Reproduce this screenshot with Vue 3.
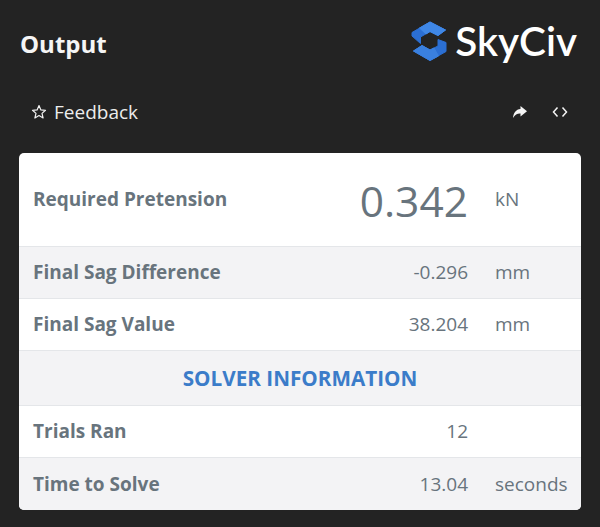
<template>
  <div class="output">
    <header class="output__head">
      <h2 class="output__title">Output</h2>
      <div class="logo">
        <svg class="logo__mark" width="36" height="41" viewBox="0 0 36 41">
          <g stroke-width="1" stroke-linejoin="round">
            <path d="M1 11.5 L19 1 L34.5 9 L27 14.5 L19 10.5 L9.5 16 L9.5 22.5 L1 15 Z" fill="#2b6fd3" stroke="#2b6fd3" />
            <path d="M8.5 7 L19 1 L34.5 9 L27 14.5 L19 10.5 L15 13 Z" fill="#3f87e6" stroke="#3f87e6" />
            <path d="M35 21.5 L35 30.5 L19 39.5 L2.5 30 L11 24.5 L19 29 L27 25 L27 18.5 Z" fill="#2b6fd3" stroke="#2b6fd3" />
            <path d="M27.5 35 L19 39.5 L2.5 30 L11 24.5 L19 29 L23 27 Z" fill="#3a80df" stroke="#3a80df" />
          </g>
        </svg>
        <span class="logo__text">SkyCiv</span>
      </div>
    </header>

    <div class="toolbar">
      <button type="button" class="toolbar__feedback">
        <svg width="16" height="16" viewBox="0 0 16 16">
          <path d="M8 1.6 L9.9 5.9 L14.5 6.3 L11 9.4 L12.1 14 L8 11.6 L3.9 14 L5 9.4 L1.5 6.3 L6.1 5.9 Z" fill="none" stroke="#f2f2f2" stroke-width="1.2" stroke-linejoin="round" />
        </svg>
        <span>Feedback</span>
      </button>
      <div class="toolbar__icons">
        <svg width="16" height="14" viewBox="0 0 16 14">
          <path d="M8.5 1 L15 6.2 L8.5 11.5 V8.6 C5.5 8.4 3 9.6 1 13 C1.4 8 4 4.4 8.5 4 Z" fill="#f5f5f5" />
        </svg>
        <svg width="16" height="12" viewBox="0 0 16 12">
          <path d="M5.5 1.5 L1.5 6 L5.5 10.5 M10.5 1.5 L14.5 6 L10.5 10.5" fill="none" stroke="#f5f5f5" stroke-width="1.5" />
        </svg>
      </div>
    </div>

    <div class="card">
      <div class="row row--big">
        <span class="row__label">Required Pretension</span>
        <span class="row__value">0.342</span>
        <span class="row__unit">kN</span>
      </div>
      <div
        v-for="item in topRows"
        :key="item.label"
        class="row"
        :class="{ 'row--grey': item.grey }"
      >
        <span class="row__label">{{ item.label }}</span>
        <span class="row__value">{{ item.value }}</span>
        <span class="row__unit">{{ item.unit }}</span>
      </div>
      <div class="card__section">SOLVER INFORMATION</div>
      <div
        v-for="item in solverRows"
        :key="item.label"
        class="row"
        :class="{ 'row--grey': item.grey }"
      >
        <span class="row__label">{{ item.label }}</span>
        <span class="row__value">{{ item.value }}</span>
        <span class="row__unit">{{ item.unit }}</span>
      </div>
    </div>
  </div>
</template>

<script setup>
const topRows = [
  { label: 'Final Sag Difference', value: '-0.296', unit: 'mm', grey: true },
  { label: 'Final Sag Value', value: '38.204', unit: 'mm', grey: false },
]

const solverRows = [
  { label: 'Trials Ran', value: '12', unit: '', grey: false },
  { label: 'Time to Solve', value: '13.04', unit: 'seconds', grey: true },
]
</script>

<style>
html,
body {
  margin: 0;
  background: #232323;
}
</style>

<style scoped>
.output {
  width: 600px;
  height: 527px;
  box-sizing: border-box;
  padding: 19px 19px 0 19px;
  background: #232323;
  font-family: 'Open Sans', sans-serif;
}

.output__head {
  display: flex;
  justify-content: space-between;
  align-items: center;
  height: 44px;
}

.output__title {
  margin: 4px 0 0 1px;
  font-size: 24px;
  font-weight: 700;
  color: #f5f5f5;
}

.logo {
  display: flex;
  align-items: center;
  gap: 8px;
  margin-right: 4px;
}

.logo__text {
  font-family: Lato, sans-serif;
  font-size: 40.4px;
  font-weight: 600;
  line-height: 44px;
  color: #fff;
}

.toolbar {
  display: flex;
  justify-content: space-between;
  align-items: center;
  height: 40px;
  margin-top: 29px;
  padding: 0 13px 0 12px;
}

.toolbar__feedback {
  display: flex;
  align-items: center;
  gap: 7px;
  padding: 0;
  border: none;
  background: transparent;
  font-family: inherit;
  font-size: 19px;
  color: #ececec;
}

.toolbar__icons {
  display: flex;
  align-items: center;
  gap: 24px;
}

.card {
  margin-top: 21px;
  background: #fff;
  border-radius: 5px;
  overflow: hidden;
}

.row {
  display: grid;
  grid-template-columns: 1fr 130px 113px;
  align-items: center;
  box-sizing: border-box;
  height: 52px;
  padding: 0 0 1px 14px;
  border-bottom: 1px solid #e4e6e9;
  color: #68747d;
  font-size: 19px;
}

.row:last-child {
  border-bottom: none;
}

.row--grey {
  background: #f3f3f5;
}

.row--big {
  height: 94px;
}

.row--big .row__value {
  padding-top: 2px;
  font-size: 42.5px;
}

.row__label {
  font-weight: 700;
}

.row__value {
  text-align: right;
}

.row__unit {
  padding-left: 27px;
}

.card__section {
  box-sizing: border-box;
  height: 55px;
  line-height: 54px;
  border-bottom: 1px solid #e4e6e9;
  background: #f3f3f5;
  text-align: center;
  font-size: 20.7px;
  font-weight: 700;
  color: #3b7cc9;
}
</style>
